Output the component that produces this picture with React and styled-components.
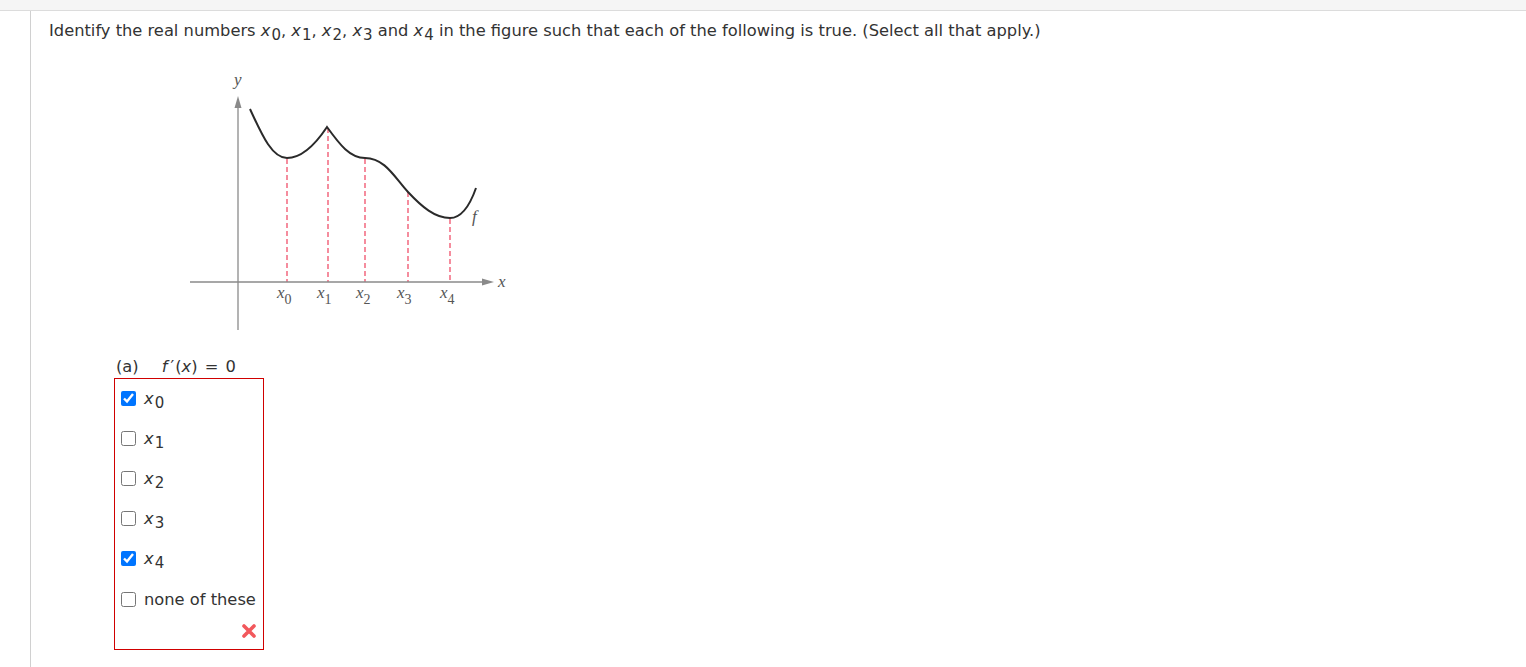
import React from 'react';
import styled, {createGlobalStyle} from 'styled-components';

const Global = createGlobalStyle`
	html, body { margin:0; padding:0; background:#fff; }
	body { font-family:"DejaVu Sans", Verdana, sans-serif; color:#333; }
`;

const Choices = [
	{ sub: "0", checked: true },
	{ sub: "1", checked: false },
	{ sub: "2", checked: false },
	{ sub: "3", checked: false },
	{ sub: "4", checked: true },
	{ text: "none of these", checked: false },
];

function V({ n }) {
	return <Var>x<Sub>{n}</Sub></Var>;
}

function Figure() {
	const dashes = [
		[287, 159], [328, 128], [365, 159], [408, 192], [450, 219],
	];
	return (
		<Graph viewBox="176 62 350 275" width="350" height="275">
			{dashes.map(([x, y]) => (
				<line key={x} x1={x} y1={y} x2={x} y2={282} stroke="#f0506a" strokeWidth="1.3" strokeDasharray="5 3" />
			))}
			<line x1="190" y1="282" x2="484" y2="282" stroke="#8a8a8a" strokeWidth="1.3" />
			<polygon points="494,282 482,278.5 482,285.5" fill="#8a8a8a" />
			<line x1="238" y1="330" x2="238" y2="106" stroke="#8a8a8a" strokeWidth="1.3" />
			<polygon points="238,96 234.5,108 241.5,108" fill="#8a8a8a" />
			<path
				d="M250,109 C262,135 272,158 287,158 C302,158 315,145 327,127 C340,145 350,158 365,158 C385,158 395,178 408,192 C422,207 435,218 450,218 C462,218 470,205 476,188"
				fill="none" stroke="#2a2a2a" strokeWidth="2"
			/>
			<GText x="234" y="85">y</GText>
			<GText x="498" y="287">x</GText>
			<GText x="472" y="222" fontSize="17">f</GText>
			{[[277, "0"], [317, "1"], [356, "2"], [397, "3"], [440, "4"]].map(([x, n]) => (
				<GText key={n} x={x} y="298">x<tspan dy="6" fontSize="14" fontStyle="normal">{n}</tspan></GText>
			))}
		</Graph>
	);
}

function App() {
	return (
		<Page>
			<Global />
			<TopBar />
			<Main>
				<Question>
					Identify the real numbers <V n="0" />, <V n="1" />, <V n="2" />, <V n="3" /> and <V n="4" /> in the figure such that each of the following is true. (Select all that apply.)
				</Question>
				<FigureWrap><Figure /></FigureWrap>
				<Part>
					<PartLabel>(a)<Expr><i>f</i><Prime>′</Prime>(<i>x</i>) = 0</Expr></PartLabel>
					<AnswerBox>
						{Choices.map((c, i) => (
							<Row key={i}>
								<Check type="checkbox" defaultChecked={c.checked} />
								{c.text ? <span>{c.text}</span> : <V n={c.sub} />}
							</Row>
						))}
						<Mark>
							<svg width="16" height="16" viewBox="0 0 16 16">
								<path d="M3 3 L13 13 M13 3 L3 13" stroke="#f2585c" strokeWidth="3.6" strokeLinecap="round" />
							</svg>
						</Mark>
					</AnswerBox>
				</Part>
			</Main>
		</Page>
	);
}

export default App;


const Page = styled.div`
	width:1526px;
	height:667px;
	overflow:hidden;
	display:flex;
	flex-direction:column;
`;

const TopBar = styled.div`
	height:10px;
	background:#f5f5f5;
	border-bottom:1px solid #dcdcdc;
	flex-shrink:0;
`;

const Main = styled.div`
	flex:1;
	margin-left:30px;
	border-left:1px solid #d0d0d0;
	padding:10px 0 0 18px;
`;

const Question = styled.div`
	font-size:16.3px;
	line-height:20px;
	color:#333;
`;

const Var = styled.span`
	font-style:italic;
`;

const Sub = styled.span`
	font-style:normal;
	font-size:15px;
	position:relative;
	top:4px;
	margin-left:1px;
`;

const FigureWrap = styled.div`
	margin:21px 0 0 127px;
	height:275px;
`;

const Graph = styled.svg`
	display:block;
`;

const GText = styled.text`
	font-family:"Liberation Serif", "DejaVu Serif", serif;
	font-style:italic;
	font-size:17px;
	fill:#555;
`;

const Part = styled.div`
	margin:20px 0 0 65px;
	width:150px;
`;

const PartLabel = styled.div`
	font-size:16.3px;
	line-height:20px;
	padding-left:2px;
	color:#333;
`;

const Expr = styled.span`
	margin-left:23px;
	word-spacing:2px;
`;

const Prime = styled.span`
	margin:0 1px 0 3px;
`;

const AnswerBox = styled.div`
	margin-top:1px;
	border:1px solid #d00000;
	height:272px;
	box-sizing:border-box;
	padding:0 6px;
	display:flex;
	flex-direction:column;
`;

const Row = styled.label`
	display:flex;
	align-items:center;
	flex-shrink:0;
	height:40.2px;
	font-size:16.3px;
	color:#333;
	gap:8px;
	&:first-child { margin-top:-1px; }
`;

const Check = styled.input`
	width:15px;
	height:15px;
	margin:0;
	accent-color:#0075ff;
`;

const Mark = styled.div`
	display:flex;
	justify-content:flex-end;
	margin-top:4px;
`;
